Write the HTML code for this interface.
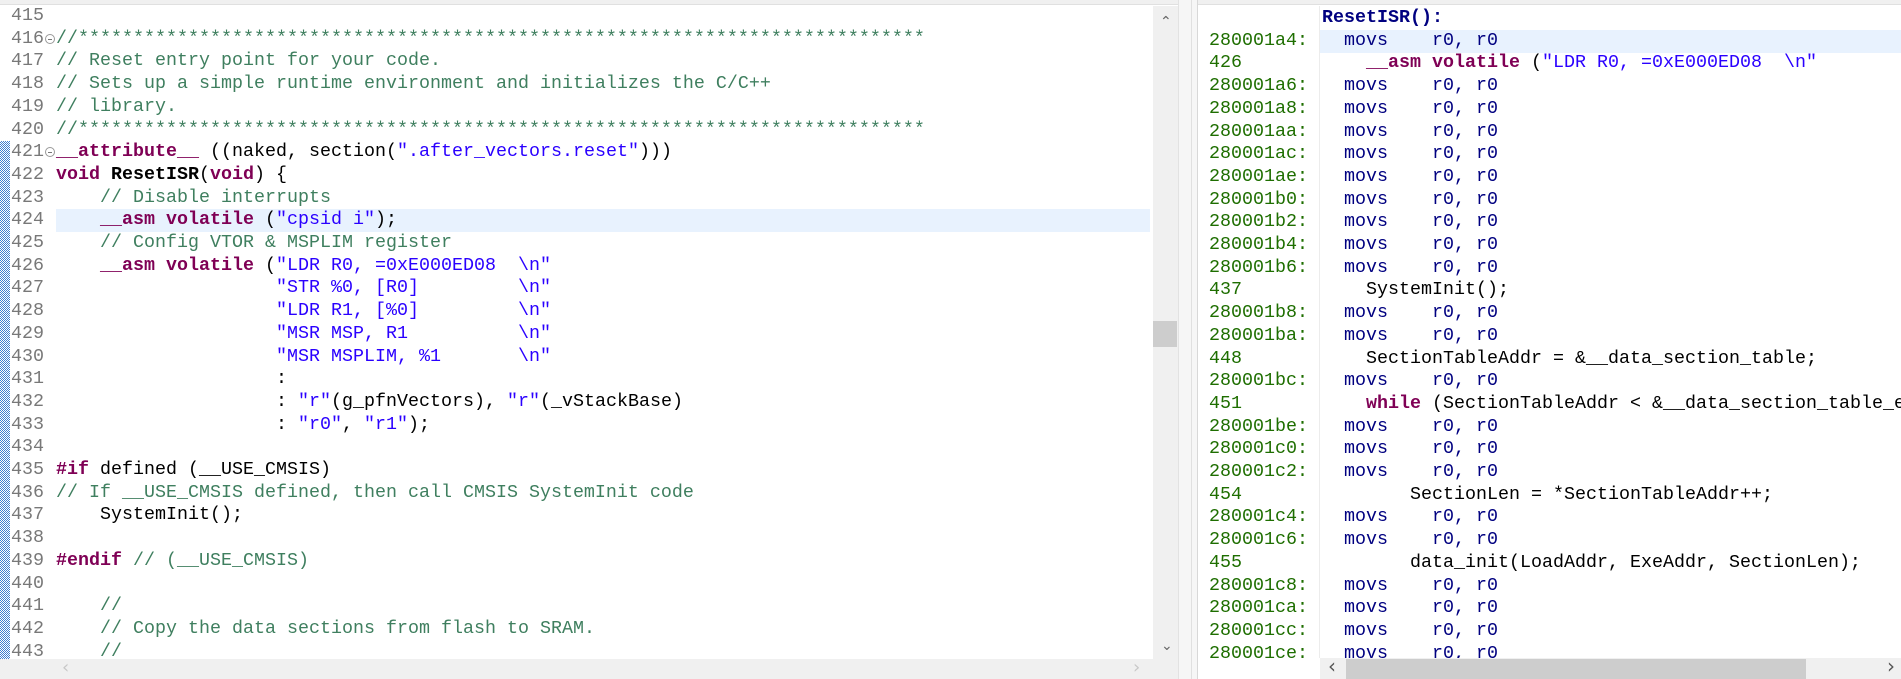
<!DOCTYPE html>
<html><head><meta charset="utf-8"><style>
*{margin:0;padding:0;box-sizing:border-box}
body{width:1901px;height:679px;overflow:hidden;background:#fff;position:relative;font-family:"Liberation Mono",monospace;font-size:18.33px}
.a{position:absolute}
pre{font-family:"Liberation Mono",monospace;font-size:18.33px;line-height:22.7px;white-space:pre}
.c{color:#3f7f5f}.k{color:#7f0055;font-weight:bold}.s{color:#2a00ff}.b{font-weight:bold}
.ln{color:#787878}
.g{color:#1e6e00}.n{color:#000080}
</style></head><body>
<div class="a" style="left:0;top:0;width:1901px;height:5px;background:#f0f0f0;border-bottom:1px solid #e0e0e0"></div>
<div class="a" style="left:0;top:141px;width:10px;height:518px;background:repeating-conic-gradient(#3f7fd0 0 25%,#fff 0 50%) 0 0/2px 2px"></div>
<div class="a" style="left:56px;top:209px;width:1094px;height:22.7px;background:#e8f2fe"></div>
<pre class="a ln" style="left:11px;top:5px">415
416
417
418
419
420
421
422
423
424
425
426
427
428
429
430
431
432
433
434
435
436
437
438
439
440
441
442
443</pre>
<div class="a" style="left:45px;top:34px;width:10px;height:10px;border:1px solid #999;border-radius:50%;font-size:0"><div style="position:absolute;left:2px;top:3.5px;width:4px;height:1px;background:#777"></div></div>
<div class="a" style="left:45px;top:147px;width:10px;height:10px;border:1px solid #999;border-radius:50%;font-size:0"><div style="position:absolute;left:2px;top:3.5px;width:4px;height:1px;background:#777"></div></div>
<pre class="a" style="left:56px;top:27.7px"><span class="c">//*****************************************************************************</span>
<span class="c">// Reset entry point for your code.</span>
<span class="c">// Sets up a simple runtime environment and initializes the C/C++</span>
<span class="c">// library.</span>
<span class="c">//*****************************************************************************</span>
<span class="k">__attribute__</span> ((naked, section(<span class="s">".after_vectors.reset"</span>)))
<span class="k">void</span> <span class="b">ResetISR</span>(<span class="k">void</span>) {
    <span class="c">// Disable interrupts</span>
    <span class="k">__asm</span> <span class="k">volatile</span> (<span class="s">"cpsid i"</span>);
    <span class="c">// Config VTOR &amp; MSPLIM register</span>
    <span class="k">__asm</span> <span class="k">volatile</span> (<span class="s">"LDR R0, =0xE000ED08  \n"</span>
                    <span class="s">"STR %0, [R0]         \n"</span>
                    <span class="s">"LDR R1, [%0]         \n"</span>
                    <span class="s">"MSR MSP, R1          \n"</span>
                    <span class="s">"MSR MSPLIM, %1       \n"</span>
                    :
                    : <span class="s">"r"</span>(g_pfnVectors), <span class="s">"r"</span>(_vStackBase)
                    : <span class="s">"r0"</span>, <span class="s">"r1"</span>);

<span class="k">#if</span> defined (__USE_CMSIS)
<span class="c">// If __USE_CMSIS defined, then call CMSIS SystemInit code</span>
    SystemInit();

<span class="k">#endif</span> <span class="c">// (__USE_CMSIS)</span>

    <span class="c">//</span>
    <span class="c">// Copy the data sections from flash to SRAM.</span>
    <span class="c">//</span></pre>
<div class="a" style="left:1153px;top:6px;width:25px;height:653px;background:#f0f0f0"></div>
<div class="a" style="left:1153px;top:321px;width:24px;height:26px;background:#cdcdcd"></div>
<div class="a" style="left:1160px;top:14px;color:#666;font-size:14px;font-family:'DejaVu Sans',sans-serif">&#8963;</div>
<div class="a" style="left:1161px;top:638px;color:#666;font-size:14px;font-family:'DejaVu Sans',sans-serif">&#8964;</div>
<div class="a" style="left:0;top:659px;width:1178px;height:20px;background:#f0f0f0"></div>
<div class="a" style="left:62px;top:657px;color:#c8c8c8;font-size:18px;font-family:'DejaVu Sans',sans-serif">&#8249;</div>
<div class="a" style="left:1133px;top:657px;color:#c8c8c8;font-size:18px;font-family:'DejaVu Sans',sans-serif">&#8250;</div>
<div class="a" style="left:1178px;top:0;width:20px;height:679px;background:#f6f6f6;border-left:1px solid #e2e2e2;border-right:1px solid #d8d8d8"></div>
<div class="a" style="left:1191px;top:0;width:1px;height:679px;background:#e0e0e0"></div>
<div class="a" style="left:1319px;top:6px;width:1px;height:653px;background:#ececec"></div>
<div class="a" style="left:1320px;top:30px;width:581px;height:22.7px;background:#e8f2fe"></div>
<pre class="a g" style="left:1209px;top:29.7px">280001a4:
426
280001a6:
280001a8:
280001aa:
280001ac:
280001ae:
280001b0:
280001b2:
280001b4:
280001b6:
437
280001b8:
280001ba:
448
280001bc:
451
280001be:
280001c0:
280001c2:
454
280001c4:
280001c6:
455
280001c8:
280001ca:
280001cc:
280001ce:</pre>
<pre class="a n" style="left:1322px;top:7px"><span class="b">ResetISR():</span>
  movs    r0, r0
<span style="color:#000">    <span class="k">__asm</span> <span class="k">volatile</span> (<span class="s">"LDR R0, =0xE000ED08  \n"</span></span>
  movs    r0, r0
  movs    r0, r0
  movs    r0, r0
  movs    r0, r0
  movs    r0, r0
  movs    r0, r0
  movs    r0, r0
  movs    r0, r0
  movs    r0, r0
<span style="color:#000">    SystemInit();</span>
  movs    r0, r0
  movs    r0, r0
<span style="color:#000">    SectionTableAddr = &amp;__data_section_table;</span>
  movs    r0, r0
<span style="color:#000">    <span class="k">while</span> (SectionTableAddr &lt; &amp;__data_section_table_end)</span>
  movs    r0, r0
  movs    r0, r0
  movs    r0, r0
<span style="color:#000">        SectionLen = *SectionTableAddr++;</span>
  movs    r0, r0
  movs    r0, r0
<span style="color:#000">        data_init(LoadAddr, ExeAddr, SectionLen);</span>
  movs    r0, r0
  movs    r0, r0
  movs    r0, r0
  movs    r0, r0</pre>
<div class="a" style="left:1198px;top:658px;width:122px;height:21px;background:#fff"></div>
<div class="a" style="left:1320px;top:658px;width:581px;height:21px;background:#f0f0f0"></div>
<div class="a" style="left:1346px;top:659px;width:460px;height:20px;background:#cdcdcd"></div>
<div class="a" style="left:1328px;top:654px;color:#555;font-size:20px;font-family:'DejaVu Sans',sans-serif">&#8249;</div>
<div class="a" style="left:1887px;top:654px;color:#555;font-size:20px;font-family:'DejaVu Sans',sans-serif">&#8250;</div>
</body></html>
